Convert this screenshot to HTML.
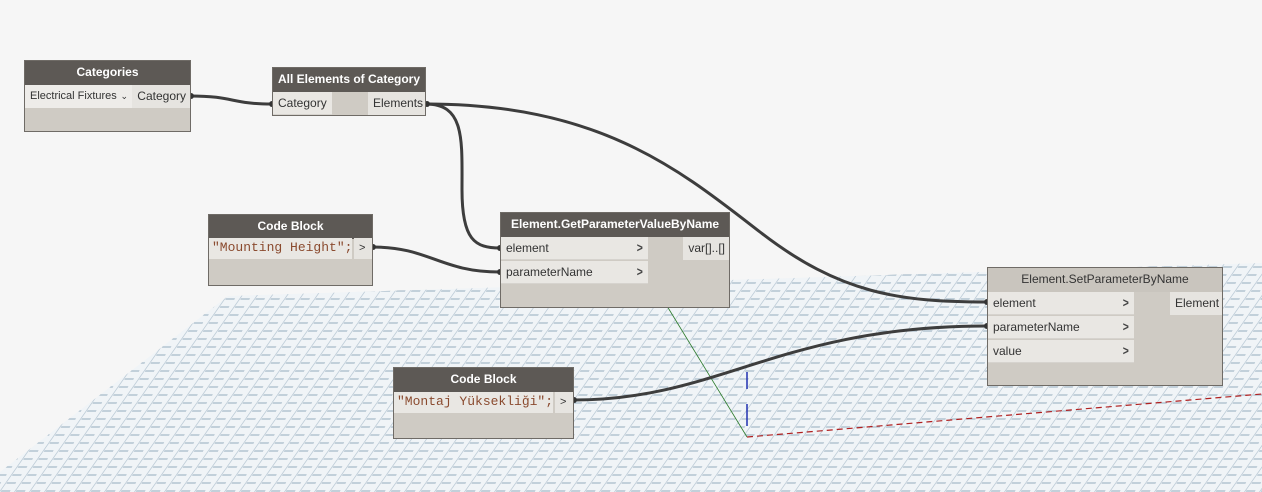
<!DOCTYPE html>
<html><head><meta charset="utf-8"><style>
*{margin:0;padding:0;box-sizing:border-box}
body{width:1262px;height:492px;overflow:hidden;background:#f6f6f6;font-family:"Segoe UI","Liberation Sans",sans-serif;position:relative}
svg.bg{position:absolute;left:0;top:0}
.node{position:absolute;background:#cfcbc4;border:1px solid #6f6b66}
.hd{background:#5d5955;color:#fff;font-weight:bold;font-size:12px;text-align:center;height:24px;line-height:23px;white-space:nowrap}
.hd.l{background:#c9c5be;color:#333;font-weight:normal}
.r{position:absolute;font-size:12px;color:#333;height:23px;line-height:22px;padding-left:5px;white-space:nowrap;overflow:hidden}
.in{background:#e9e7e3;border-bottom:1px solid #d6d3ce}
.ch{position:absolute;right:4px;top:0;font-weight:bold;font-size:13px;color:#444;transform:scaleX(0.8)}
.code{font-family:"Liberation Mono",monospace;font-size:13px;color:#8a4a2e;background:#e9e7e3;line-height:20px;height:21px}
.out{background:#e6e4e0;text-align:right;padding-right:4px}
</style></head><body>
<svg class="bg" width="1262" height="492">
<defs>
<pattern id="g" width="15" height="8" patternUnits="userSpaceOnUse" patternTransform="skewX(-35)">
<line x1="0" y1="3" x2="9" y2="3" stroke="#8ea6b8" stroke-width="1"/>
<line x1="14" y1="0" x2="14" y2="8" stroke="#a9bccb" stroke-width="0.7"/>
</pattern>
</defs>
<polygon points="228,296 1262,263 1262,492 0,492 0,472" fill="#f0f4f7"/>
<polygon points="228,296 1262,263 1262,492 0,492 0,472" fill="url(#g)"/>
<line x1="667" y1="306" x2="747" y2="437" stroke="#2a7a2a" stroke-width="0.8"/>
<line x1="747" y1="372" x2="747" y2="389" stroke="#2030b0" stroke-width="1.5"/>
<line x1="747" y1="404" x2="747" y2="426" stroke="#2030b0" stroke-width="1.5"/>
<line x1="747" y1="437" x2="1262" y2="394" stroke="#b02020" stroke-width="1.2" stroke-dasharray="6,4"/>
<g fill="none" stroke="#3d3d3d" stroke-width="3">
<path d="M190 96 C235 96,230 104,272 104"/>
<path d="M426 104 C465 104,462 140,462 190 C462 240,475 248,500 248"/>
<path d="M426 104 C600 104,680 170,760 232 C840 294,900 302,987 302"/>
<path d="M372 247 C430 247,440 272,500 272"/>
<path d="M574 400 C720 400,780 326,987 326"/>
</g>
<g fill="#333">
<circle cx="191" cy="96" r="3"/><circle cx="272" cy="104" r="3"/><circle cx="427" cy="104" r="3"/>
<circle cx="373" cy="247" r="3"/><circle cx="500" cy="248" r="3"/><circle cx="500" cy="272" r="3"/>
<circle cx="574" cy="400" r="3"/><circle cx="987" cy="302" r="3"/><circle cx="987" cy="326" r="3"/>
</g>
</svg>

<div class="node" style="left:24px;top:60px;width:167px;height:72px">
<div class="hd">Categories</div>
<div class="r" style="left:0;top:24px;width:107px;background:#eeece9;font-size:11px">Electrical Fixtures <span style="position:absolute;right:4px;font-size:9px">⌄</span></div>
<div class="r out" style="left:107px;top:24px;width:58px">Category</div>
</div>

<div class="node" style="left:272px;top:67px;width:154px;height:49px">
<div class="hd">All Elements of Category</div>
<div class="r in" style="left:0;top:24px;width:59px">Category</div>
<div class="r out" style="left:95px;top:24px;width:57px">Elements</div>
</div>

<div class="node" style="left:208px;top:214px;width:165px;height:72px">
<div class="hd">Code Block</div>
<div class="r code" style="left:0;top:23px;width:143px;padding-left:3px">"Mounting Height";</div>
<div class="r" style="left:145px;top:23px;width:18px;background:#e6e4e0;font-size:11px;height:21px;line-height:20px">&gt;</div>
</div>

<div class="node" style="left:500px;top:212px;width:230px;height:96px">
<div class="hd">Element.GetParameterValueByName</div>
<div class="r in" style="left:0;top:24px;width:147px">element<span class="ch">&gt;</span></div>
<div class="r in" style="left:0;top:48px;width:147px">parameterName<span class="ch">&gt;</span></div>
<div class="r out" style="left:182px;top:24px;width:46px">var[]..[]</div>
</div>

<div class="node" style="left:987px;top:267px;width:236px;height:119px">
<div class="hd l">Element.SetParameterByName</div>
<div class="r in" style="left:0;top:24px;width:146px">element<span class="ch">&gt;</span></div>
<div class="r in" style="left:0;top:48px;width:146px">parameterName<span class="ch">&gt;</span></div>
<div class="r in" style="left:0;top:72px;width:146px">value<span class="ch">&gt;</span></div>
<div class="r out" style="left:182px;top:24px;width:52px">Element</div>
</div>

<div class="node" style="left:393px;top:367px;width:181px;height:72px">
<div class="hd">Code Block</div>
<div class="r code" style="left:0;top:24px;width:159px;padding-left:3px">"Montaj Yüksekliği";</div>
<div class="r" style="left:161px;top:24px;width:18px;background:#e6e4e0;font-size:11px;height:21px;line-height:20px">&gt;</div>
</div>
</body></html>
